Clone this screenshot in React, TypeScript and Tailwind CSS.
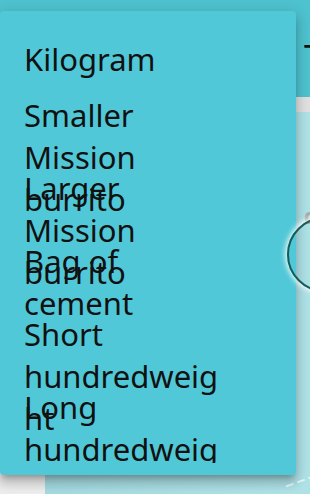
import React from 'react'

const units = [
  'Kilogram',
  'Smaller Mission burrito',
  'Larger Mission burrito',
  'Bag of cement',
  'Short hundredweight',
  'Long hundredweight',
]

/**
 * Unit picker — open dropdown menu over the converter screen.
 */
export default function App() {
  return (
    <div className="relative h-[494px] w-[310px] overflow-hidden bg-[#ececec] font-['Noto_Sans',sans-serif] text-[#111]">
      {/* page behind the menu */}
      <div className="flex h-full flex-col">
        <header className="relative h-[97px] shrink-0 bg-[#4ec2cf]">
          <span className="absolute left-[304px] top-[40px] whitespace-nowrap text-[34px] leading-none">
            Temperature
          </span>
        </header>
        <div className="h-[15px] shrink-0 bg-[#e0e0e0]" />
        <div className="flex flex-1">
          <aside className="w-[45px] shrink-0 bg-[#ececec]" />
          <main className="relative flex-1 bg-gradient-to-r from-[#a3d9df] to-[#aee2e7]">
            <span className="absolute left-[259px] top-[92px] text-[22px] font-bold leading-none text-[#a9a9a9]">
              d
            </span>
            <div className="absolute left-[240px] top-[368px] flex rotate-[-20deg] gap-1">
              <span className="h-[2px] w-[8px] bg-white/70" />
              <span className="h-[2px] w-[8px] bg-white/70" />
              <span className="h-[2px] w-[8px] bg-white/70" />
            </div>
          </main>
        </div>
      </div>

      {/* open dropdown */}
      <div className="absolute left-0 top-[11px] h-[464px] w-[296px] rounded-[4px] bg-[#51c8d7] py-[12px] shadow-[0_8px_10px_1px_rgba(0,0,0,0.14),0_3px_14px_2px_rgba(0,0,0,0.12),0_5px_5px_-3px_rgba(0,0,0,0.2)]">
        <ul className="h-full overflow-hidden pt-[15px]">
          {units.map((u, i) => (
            <li key={u} className={i === 0 ? 'h-[56px]' : 'h-[73px]'}>
              <div className="w-[226px] break-words pl-[24px] text-[31px] leading-[42px]">{u}</div>
            </li>
          ))}
        </ul>
      </div>

      {/* round handle that sits above the menu */}
      <div className="absolute left-[287px] top-[217px] h-[75px] w-[75px] rounded-full border-2 border-[#175c5a] shadow-[0_0_5px_2px_rgba(255,255,255,0.85)]" />
    </div>
  )
}
